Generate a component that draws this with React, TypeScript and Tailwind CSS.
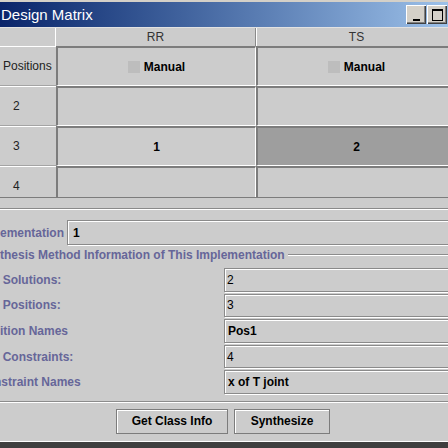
import React from 'react';

const LABEL = 'whitespace-nowrap font-bold text-[#666699]';
const CELL =
  'flex items-center justify-center border-t-2 border-l-2 border-b border-r border-t-[#7c7c7c] border-l-[#7c7c7c] border-b-white border-r-white';
const FIELD =
  'flex h-full items-center whitespace-nowrap border border-[#8a8a8a] shadow-[inset_1px_1px_0_#ffffff,1px_1px_0_#ffffff]';

function TitleButton({ children }: { children?: React.ReactNode }) {
  return (
    <div className="relative flex h-[19px] w-[20px] shrink-0 items-center justify-center bg-[#d4d0c8] shadow-[inset_1px_1px_0_#ffffff,inset_-1px_-1px_0_#404040,inset_-2px_-2px_0_#808080]">
      {children}
    </div>
  );
}

function RowHead({ children, pad }: { children: React.ReactNode; pad: string }) {
  return (
    <div className={`flex items-center border-t border-b border-t-white border-b-[#a4a4a4] ${pad}`}>
      {children}
    </div>
  );
}

function Manual() {
  return (
    <div className={CELL}>
      <span className="mr-[4px] h-[12px] w-[12px] bg-[#bdbdbd]" />
      <span className="font-bold text-black">Manual</span>
    </div>
  );
}

function InfoRow({ label, value, bold }: { label: string; value: string; bold?: boolean }) {
  return (
    <div className="flex h-[25.6px]">
      <div className="flex w-[246px] shrink-0 items-center">
        <span className={LABEL}>{label}</span>
      </div>
      <div className="flex-1 py-px">
        <div className={`${FIELD} ${bold ? 'pl-[3px] font-bold' : 'pl-[2px]'} text-black`}>{value}</div>
      </div>
    </div>
  );
}

export default function App() {
  return (
    <div className="relative h-[448px] w-[448px] overflow-hidden bg-[#cccccc] font-['Liberation_Sans',Arial,sans-serif] text-[12px] leading-none text-[#222]">
      <div className="h-[2px] bg-[#d4d0c8]" />

      {/* title bar */}
      <div className="flex h-[25px] w-[472px] items-center bg-gradient-to-r from-[#0a246a] to-[#a6caf0] pr-[3px]">
        <span className="pl-px text-[15px] text-white">Design Matrix</span>
        <div className="ml-auto flex items-center">
          <TitleButton>
            <span className="mt-[10px] h-[2px] w-[7px] bg-black" />
          </TitleButton>
          <div className="w-px" />
          <TitleButton>
            <span className="h-[12px] w-[11px] border border-t-2 border-black" />
          </TitleButton>
          <div className="w-[2px]" />
          <TitleButton />
        </div>
      </div>
      <div className="h-px bg-[#e2e2e2]" />

      {/* design matrix */}
      <div className="h-[169px] overflow-hidden">
        <div className="grid w-[456px] grid-cols-[56px_200px_200px] grid-rows-[18px_40px_40px_40px_40px]">
          <div className="border-r border-white" />
          <div className="flex items-center justify-center border-r border-[#8a8a8a] text-[#333]">RR</div>
          <div className="flex items-center justify-center border-l border-white text-[#333]">TS</div>

          <RowHead pad="pl-[3px]">Positions</RowHead>
          <Manual />
          <Manual />

          <RowHead pad="pl-[13px]">2</RowHead>
          <div className={CELL} />
          <div className={CELL} />

          <RowHead pad="pl-[13px]">3</RowHead>
          <div className={`${CELL} font-bold text-black`}>1</div>
          <div className={`${CELL} bg-[#9e9e9e] font-bold text-black`}>2</div>

          <RowHead pad="pl-[13px]">4</RowHead>
          <div className={CELL} />
          <div className={CELL} />
        </div>
      </div>
      <div className="h-px bg-[#7c7c7c]" />
      <div className="h-[10px]" />
      <div className="border-t border-b border-t-[#8a8a8a] border-b-white" />
      <div className="h-[10px]" />

      {/* implementation + synthesis info */}
      <div className="-ml-[22px] w-[500px]">
        <div className="flex h-[26px]">
          <div className="flex w-[86px] shrink-0 items-center justify-end">
            <span className={`${LABEL} shrink-0`}>Implementation</span>
          </div>
          <div className="ml-[3px] flex-1 pb-px">
            <div className={`${FIELD} pl-[5px] font-bold text-black`}>1</div>
          </div>
        </div>

        <div className="flex h-[18px] items-center">
          <span className={LABEL}>Synthesis Method Information of This Implementation</span>
          <div className="ml-[3px] h-0 flex-1 border-t border-b border-t-[#8c8c8c] border-b-white" />
        </div>
        <div className="h-[3px]" />

        <InfoRow label="# of Solutions:" value="2" />
        <InfoRow label="# of Positions:" value="3" />
        <InfoRow label="Position Names" value="Pos1" bold />
        <InfoRow label="# of Constraints:" value="4" />
        <InfoRow label="Constraint Names" value="x of T joint" bold />
      </div>

      <div className="h-[6px]" />
      <div className="border-t border-b border-t-[#8c8c8c] border-b-white" />
      <div className="h-[6px]" />

      {/* buttons */}
      <div className="flex h-[25px] gap-[6px] pl-[116px]">
        <button className="flex h-full w-[112px] items-center justify-center border border-[#7c7c7c] font-bold text-black shadow-[inset_1px_1px_0_#ffffff]">
          Get Class Info
        </button>
        <button className="flex h-full w-[96px] items-center justify-center border border-[#7c7c7c] font-bold text-black shadow-[inset_1px_1px_0_#ffffff]">
          Synthesize
        </button>
      </div>

      <div className="h-[7px]" />
      <div className="h-px bg-white" />
      <div className="h-[6px] bg-[#3f3f3f]" />
    </div>
  );
}
